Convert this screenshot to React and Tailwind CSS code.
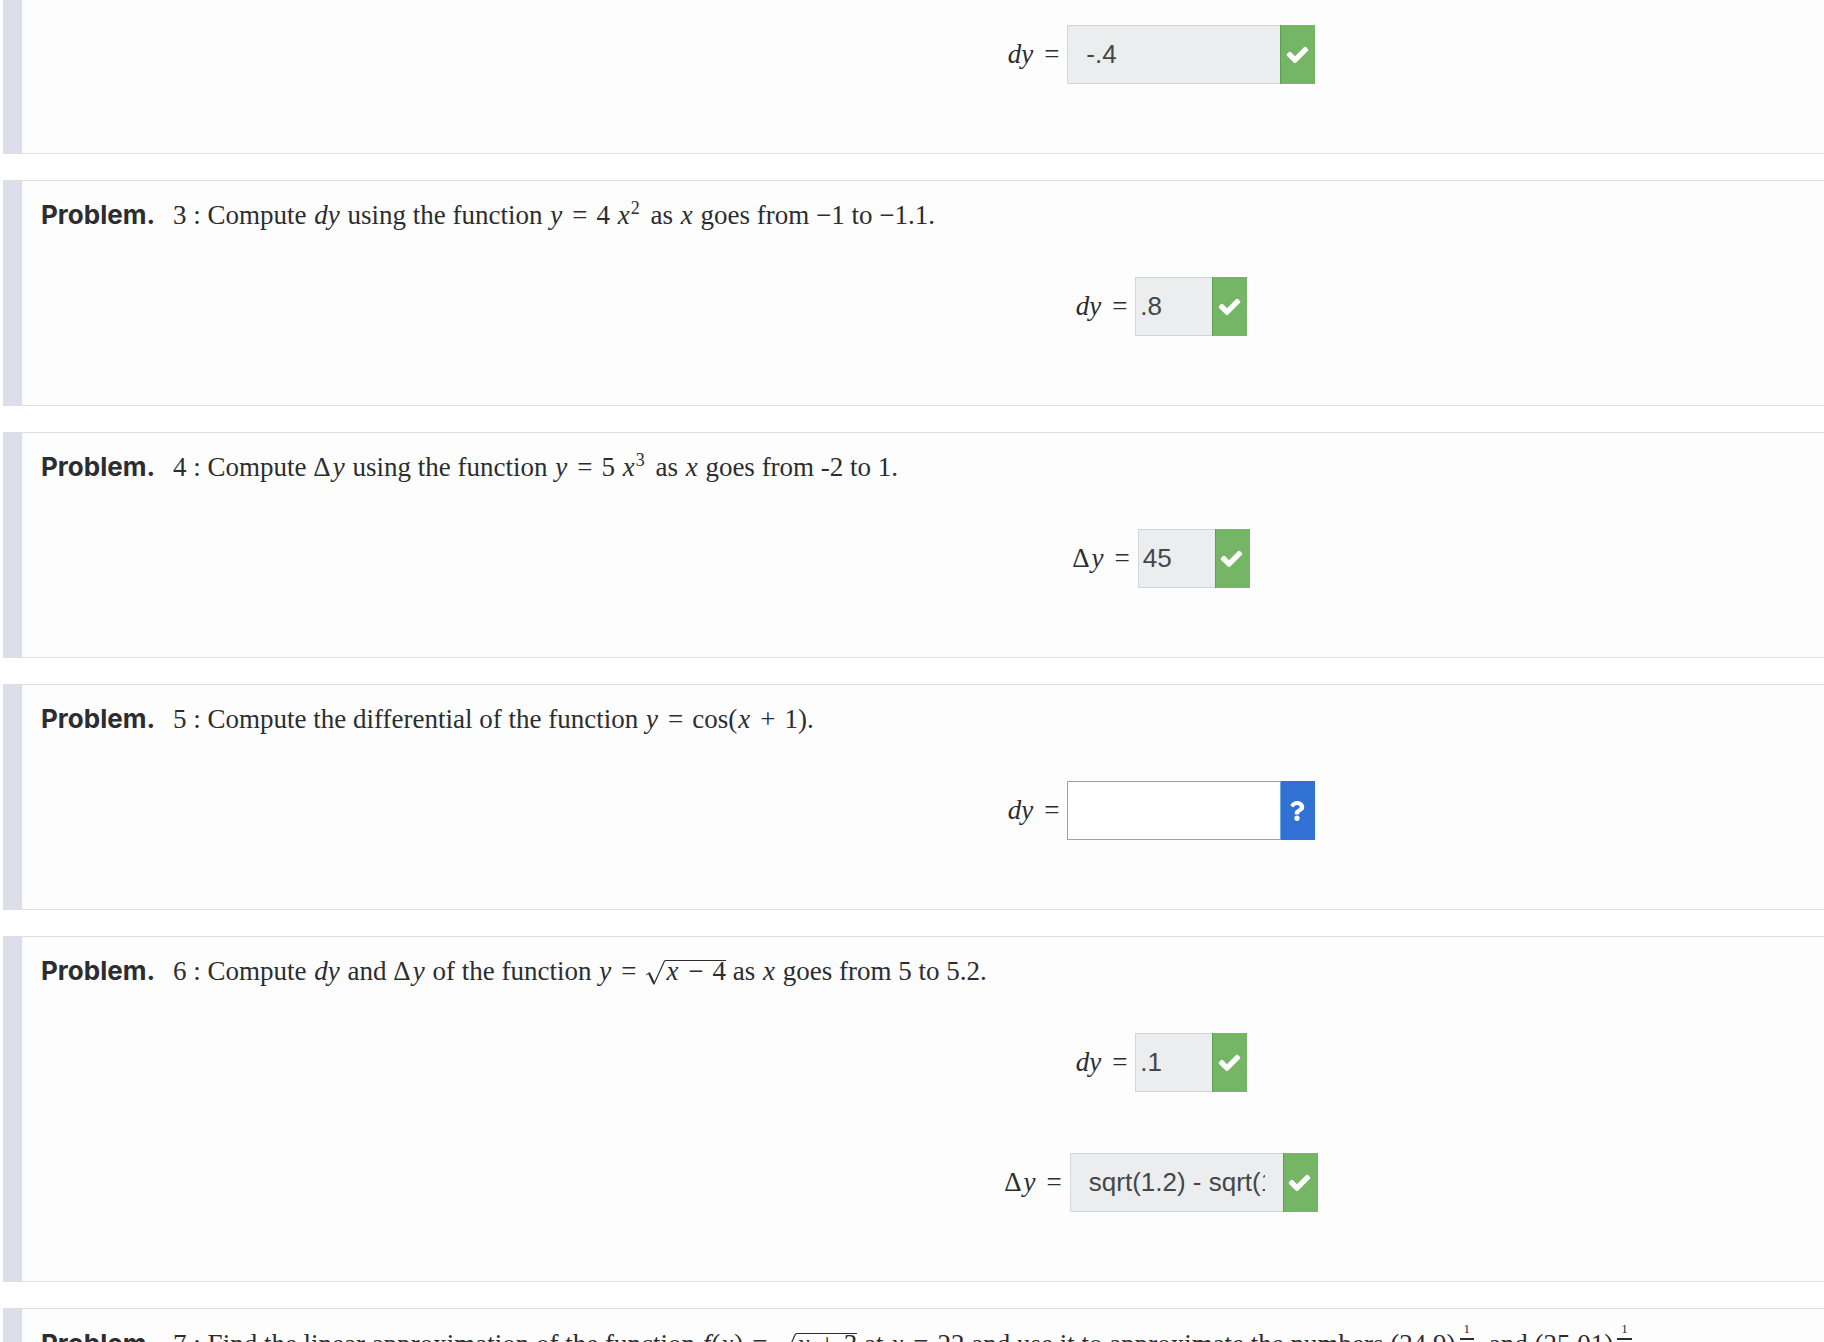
import { FaQuestion } from 'react-icons/fa';

function CheckIcon() {
  return (
    <svg viewBox="0 0 1792 1792" className="w-[25px] h-[25px] fill-white" aria-hidden="true">
      <path d="M1671 566q0 40-28 68l-724 724-136 136q-28 28-68 28t-68-28l-136-136-362-362q-28-28-28-68t28-68l136-136q28-28 68-28t68 28l294 295 656-657q28-28 68-28t68 28l136 136q28 28 28 68z" />
    </svg>
  );
}

// math variable
function V({ children }) {
  return <i className="mx-px">{children}</i>;
}

// math relation or binary operator
function Op({ children }) {
  return <span className="mx-[9px]">{children}</span>;
}

function Sup({ children }) {
  return <span className="inline-block align-super text-[18px] leading-none mr-1">{children}</span>;
}

function Sqrt({ children }) {
  return (
    <span>
      <svg viewBox="0 0 20 25" className="inline w-5 h-[25px] align-[-5px]" fill="none" stroke="#2b2d2f" aria-hidden="true">
        <path d="M1 15 L4.500 12.500" strokeWidth="1" />
        <path d="M4 13 L9 23.500" strokeWidth="2.200" />
        <path d="M8.800 24.500 L19.700 0.500" strokeWidth="1.200" />
      </svg>
      <span className="inline-block leading-5 border-t border-[#2b2d2f]">{children}</span>
    </span>
  );
}

function Frac({ top, bottom }) {
  return (
    <span className="inline-flex flex-col items-center align-[20px] -mt-[5px] ml-1 mr-2 text-[13px]">
      <span className="border-b-2 border-[#2b2d2f] px-1 leading-[18px]">{top}</span>
      <span className="leading-4">{bottom}</span>
    </span>
  );
}

function Problem({ number, children, answers }) {
  return (
    <section className="bg-[#fdfdfd] border-y border-l-[19px] border-[#dedeea] pl-[19px] pb-[69px]">
      <p className="h-24 pt-4 leading-9 text-[27px] whitespace-nowrap">
        <b className="font-['Inter',sans-serif] font-bold text-[26px] mr-[18px]">Problem.</b>
        {number} : {children}
      </p>
      {answers}
    </section>
  );
}

function Answers({ children }) {
  return <div className="pl-[457px] flex flex-col items-center gap-[61px]">{children}</div>;
}

function Answer({ id, name, value, wide }) {
  const done = value !== undefined;

  return (
    <div className="flex items-center text-[27px]">
      <label htmlFor={id} className="mr-2">
        {name}
        <span className="ml-2.5">=</span>
      </label>
      <input
        id={id}
        type="text"
        defaultValue={value}
        readOnly={done}
        className={`h-[59px] border border-r-0 font-['Liberation_Sans',sans-serif] text-[26px] text-[#444648] outline-none rounded-none ${
        wide ? 'w-[213px] pl-[18px] pr-[18px]' : 'w-[77px] px-1'} ${
        done ? 'bg-[#ecedef] border-[#d4d5d6]' : 'bg-white border-[#71abe8]'}`
        } />
      
      <button
        aria-label={done ? 'Correct' : 'Check work'}
        className={`w-[35px] h-[59px] pr-0.5 flex items-center justify-center border-l ${
        done ? 'bg-[#74b566] border-[#5c9f50]' : 'bg-[#3071d3] border-[#71abe8]'}`
        }>
        {done ? <CheckIcon /> : <FaQuestion size={20} color="#fff" />}
      </button>
    </div>
  );
}

const dy = <V>dy</V>;
const deltaY = <><span className="mr-px">Δ</span><V>y</V></>;

export default function App() {
  return (
    <main className="h-screen overflow-hidden bg-white pl-[3px] flex flex-col gap-[26px] *:flex-none font-['Liberation_Serif',serif] text-[#2b2d2f]">
      <section className="bg-[#fdfdfd] border-b border-l-[19px] border-[#dedeea] pl-[19px] pt-[25px] pb-[69px]">
        <Answers>
          <Answer id="p2-dy" name={dy} value="-.4" wide />
        </Answers>
      </section>

      <Problem
        number={3}
        answers={<Answers><Answer id="p3-dy" name={dy} value=".8" /></Answers>}>
        Compute {dy} using the function <V>y</V><Op>=</Op>4 <V>x</V><Sup>2</Sup> as <V>x</V> goes from −1 to −1.1.
      </Problem>

      <Problem
        number={4}
        answers={<Answers><Answer id="p4-delta" name={deltaY} value="45" /></Answers>}>
        Compute {deltaY} using the function <V>y</V><Op>=</Op>5 <V>x</V><Sup>3</Sup> as <V>x</V> goes from -2 to 1.
      </Problem>

      <Problem
        number={5}
        answers={<Answers><Answer id="p5-dy" name={dy} wide /></Answers>}>
        Compute the differential of the function <V>y</V><Op>=</Op>cos(<V>x</V><Op>+</Op>1).
      </Problem>

      <Problem
        number={6}
        answers={
        <Answers>
            <Answer id="p6-dy" name={dy} value=".1" />
            <Answer id="p6-delta" name={deltaY} value="sqrt(1.2) - sqrt(1)" wide />
          </Answers>
        }>
        Compute {dy} and {deltaY} of the function <V>y</V><Op>=</Op><Sqrt><V>x</V><Op>−</Op>4</Sqrt> as <V>x</V> goes from 5 to 5.2.
      </Problem>

      <Problem number={7}>
        Find the linear approximation of the function <V>f</V>(<V>x</V>)<Op>=</Op><Sqrt><V>x</V><Op>+</Op>3</Sqrt> at <V>x</V><Op>=</Op>22 and use it to approximate the numbers (24.9)<Frac top="1" bottom="2" /> and (25.01)<Frac top="1" bottom="2" />
      </Problem>
    </main>
  );
}
